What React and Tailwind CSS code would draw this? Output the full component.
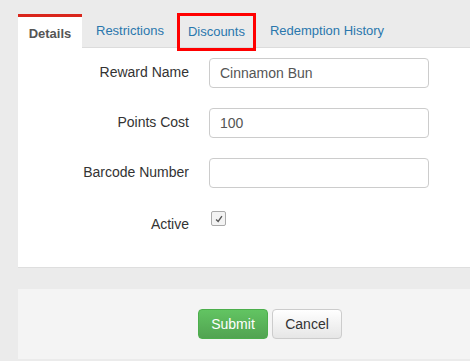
export default function App() {
    const fields = [
        { label: 'Reward Name', value: 'Cinnamon Bun' },
        { label: 'Points Cost', value: '100' },
        { label: 'Barcode Number', value: '' },
    ]

    return (
        <div className="w-[470px] h-[361px] overflow-hidden bg-[#ebebeb] font-['Liberation_Sans',Arial,sans-serif] text-[14px] text-[#333]">
            <div className="pl-[18px] pt-[13px]">
                {/* Tabs */}
                <div className="flex items-end h-[35px] text-[13px]">
                    <div className="w-[64px] h-[34px] pt-[2px] bg-white border-t-[3px] border-[#d9261c] flex items-center justify-center font-bold text-[#555]">
                        Details
                    </div>
                    <div className="flex-1 flex items-end h-[35px] border-b border-[#dcdcdc]">
                        <div className="pl-[14px] pr-[13px] pt-[2px] h-[34px] flex items-center text-[#2a77ad]">Restrictions</div>
                        <div className="w-[79px] h-[38px] mb-[-4px] border-[3px] border-[#f00] flex items-center justify-center text-[#2a77ad]">
                            <span className="mt-[-1px]">Discounts</span>
                        </div>
                        <div className="pl-[14px] pt-[2px] h-[34px] flex items-center text-[#2a77ad]">Redemption History</div>
                    </div>
                </div>

                {/* Form panel */}
                <div className="bg-white h-[220px] border-b border-[#dedede] pt-[10px]">
                    {fields.map((f) => (
                        <div key={f.label} className="flex items-center h-[29px] mb-[21px]">
                            <label className="w-[171px] text-right">{f.label}</label>
                            <input
                                type="text"
                                defaultValue={f.value}
                                className="ml-[20px] w-[220px] h-[30px] px-[10px] border border-[#ccc] rounded-[4px] text-[14px] text-[#555] outline-none"
                            />
                        </div>
                    ))}
                    <div className="flex items-start h-[29px]">
                        <label className="w-[171px] text-right mt-[6px]">Active</label>
                        <span className="ml-[22px] mt-[3px] w-[15px] h-[15px] border border-[#aaa] rounded-[2px] bg-[#f3f3f3] flex items-center justify-center">
                            <svg viewBox="0 0 12 12" className="w-[10px] h-[10px]">
                                <path d="M2.5 6.5 L5 9 L9.5 2.5" fill="none" stroke="#555" strokeWidth="1.6" />
                            </svg>
                        </span>
                    </div>
                </div>

                {/* Footer */}
                <div className="mt-[21px] bg-[#f4f4f4] h-[70px] flex items-center gap-[4px] pl-[180px]">
                    <button className="w-[70px] h-[30px] rounded-[4px] border border-[#4cae4c] bg-gradient-to-b from-[#62c462] to-[#51a351] text-white">
                        Submit
                    </button>
                    <button className="w-[70px] h-[30px] rounded-[4px] border border-[#ccc] bg-gradient-to-b from-white to-[#e6e6e6] text-[#333]">
                        Cancel
                    </button>
                </div>
            </div>
        </div>
    )
}
